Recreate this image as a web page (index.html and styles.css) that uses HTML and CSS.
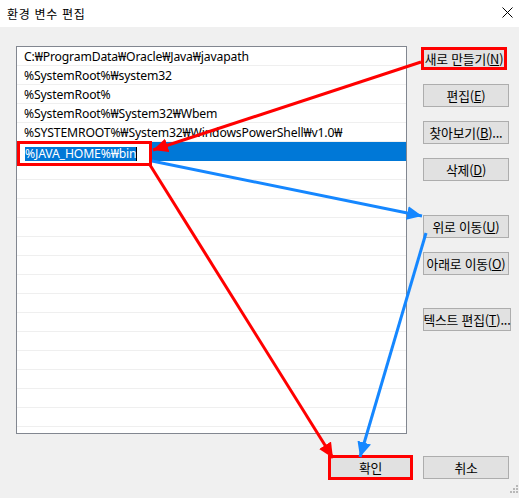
FILE: index.html
```html
<!DOCTYPE html>
<html lang="ko">
<head>
<meta charset="utf-8">
<title>환경 변수 편집</title>
<link rel="stylesheet" href="styles.css">
</head>
<body>
<div class="window">
  <div class="titlebar">
    <span class="title">환경 변수 편집</span>
    <svg class="close" width="11" height="11" viewBox="0 0 11 11"><path d="M0.5 0.5 L10.5 10.5 M10.5 0.5 L0.5 10.5" stroke="#000" stroke-width="1" fill="none"/></svg>
  </div>
  <div class="content">
    <div class="main">
      <div class="list">
        <div class="row">C:₩ProgramData₩Oracle₩Java₩javapath</div>
        <div class="row">%SystemRoot%₩system32</div>
        <div class="row">%SystemRoot%</div>
        <div class="row">%SystemRoot%₩System32₩Wbem</div>
        <div class="row">%SYSTEMROOT%₩System32₩WindowsPowerShell₩v1.0₩</div>
        <div class="row selected">
          <div class="edit"><span class="sel">%JAVA_HOME%₩bin</span><span class="caret"></span></div>
        </div>
        <div class="row"></div><div class="row"></div><div class="row"></div><div class="row"></div>
        <div class="row"></div><div class="row"></div><div class="row"></div><div class="row"></div>
        <div class="row"></div><div class="row"></div><div class="row"></div><div class="row"></div>
        <div class="row"></div><div class="row last"></div>
      </div>
      <div class="side">
        <button class="btn hl-new">새로 만들기(<u>N</u>)</button>
        <button class="btn">편집(<u>E</u>)</button>
        <button class="btn">찾아보기(<u>B</u>)...</button>
        <button class="btn">삭제(<u>D</u>)</button>
        <button class="btn group">위로 이동(<u>U</u>)</button>
        <button class="btn">아래로 이동(<u>O</u>)</button>
        <button class="btn group2 wide">텍스트 편집(<u>T</u>)...</button>
      </div>
    </div>
    <div class="footer">
      <button class="btn hl-ok">확인</button>
      <button class="btn">취소</button>
    </div>
  </div>
  <svg class="arrows" width="519" height="498" viewBox="0 0 519 498">
    <defs>
      <marker id="mr" markerUnits="userSpaceOnUse" markerWidth="16" markerHeight="14" refX="15" refY="7" orient="auto">
        <path d="M0 0 L15 7 L0 14 Z" fill="#ff0000"/>
      </marker>
      <marker id="mb" markerUnits="userSpaceOnUse" markerWidth="16" markerHeight="14" refX="15" refY="7" orient="auto">
        <path d="M0 0 L15 7 L0 14 Z" fill="#1587ff"/>
      </marker>
    </defs>
    <line x1="421" y1="62" x2="153" y2="150" stroke="#ff0000" stroke-width="3" marker-end="url(#mr)"/>
    <line x1="150" y1="165" x2="333" y2="458" stroke="#ff0000" stroke-width="3" marker-end="url(#mr)"/>
    <line x1="152" y1="161" x2="422" y2="216" stroke="#1587ff" stroke-width="3" marker-end="url(#mb)"/>
    <line x1="426" y1="233" x2="360" y2="457" stroke="#1587ff" stroke-width="3" marker-end="url(#mb)"/>
  </svg>
  <svg class="grip" width="8" height="8" viewBox="0 0 8 8">
    <rect x="6" y="0" width="2" height="2" fill="#b8b8b8"/>
    <rect x="3" y="3" width="2" height="2" fill="#b8b8b8"/>
    <rect x="6" y="3" width="2" height="2" fill="#b8b8b8"/>
    <rect x="0" y="6" width="2" height="2" fill="#b8b8b8"/>
    <rect x="3" y="6" width="2" height="2" fill="#b8b8b8"/>
    <rect x="6" y="6" width="2" height="2" fill="#b8b8b8"/>
  </svg>
</div>
</body>
</html>
```

FILE: styles.css
```css
html, body {
  margin: 0;
  padding: 0;
}
body {
  width: 519px;
  height: 498px;
  overflow: hidden;
  font-family: "Noto Sans", "Noto Sans CJK KR", sans-serif;
  font-size: 12px;
  color: #000;
}
.window {
  position: relative;
  width: 519px;
  height: 498px;
  background: #f0f0f0;
}
.titlebar {
  height: 27px;
  background: #fff;
  display: flex;
  align-items: center;
  justify-content: space-between;
  padding: 0 6px 0 7px;
}
.title {
  font-family: "Noto Sans CJK KR", sans-serif;
  font-size: 12px;
  letter-spacing: 0.7px;
  margin-top: -1px;
}
.close {
  display: block;
  margin-top: -2px;
}
.content {
  padding: 19px 0 0 16px;
}
.main {
  display: flex;
  align-items: flex-start;
}
.list {
  width: 391px;
  height: 388px;
  box-sizing: border-box;
  border: 1px solid #828790;
  background: #fff;
  overflow: hidden;
}
.row {
  height: 19px;
  box-sizing: border-box;
  border-bottom: 1px solid #efefef;
  padding-left: 7px;
  padding-top: 1px;
  line-height: 17px;
  font-size: 12.2px;
  letter-spacing: -0.15px;
  white-space: nowrap;
  display: flex;
  align-items: flex-start;
}
.row.selected {
  background: #0078d7;
  padding-left: 0;
  padding-top: 0;
  border-bottom-color: #0078d7;
}
.edit {
  margin-top: -1px;
  width: 135px;
  height: 25px;
  box-sizing: border-box;
  border: 3px solid #ff0000;
  background: #fff;
  display: flex;
  align-items: center;
  padding-left: 5px;
  padding-top: 1px;
  position: relative;
  z-index: 1;
}
.sel {
  background: #0078d7;
  color: #fff;
  line-height: 14px;
  height: 14px;
}
.caret {
  width: 1px;
  height: 14px;
  background: #000;
}
.side {
  display: flex;
  flex-direction: column;
  align-items: flex-start;
  margin-left: 16px;
  padding-top: 1px;
  gap: 14px;
}
.btn {
  width: 86px;
  height: 23px;
  box-sizing: border-box;
  border: 1px solid #adadad;
  background: #e1e1e1;
  font-family: "Noto Sans CJK KR", sans-serif;
  font-size: 12.8px;
  color: #000;
  padding: 0;
  margin: 0;
  white-space: nowrap;
  display: flex;
  align-items: center;
  justify-content: center;
  letter-spacing: -0.2px;
}
.btn.wide {
  width: 88px;
}
.btn.group {
  margin-top: 20px;
}
.btn.group2 {
  margin-top: 19px;
}
.hl-new {
  border: 3px solid #ff0000;
  margin-left: -2px;
}
.footer {
  display: flex;
  justify-content: flex-end;
  align-items: center;
  gap: 10px;
  padding-right: 10px;
  margin-top: 21px;
}
.hl-ok {
  width: 85px;
  height: 25px;
  border: 3px solid #ff0000;
}
.arrows {
  position: absolute;
  left: 0;
  top: 0;
  pointer-events: none;
  z-index: 5;
}
.grip {
  position: absolute;
  right: 1px;
  bottom: 5px;
}
```
